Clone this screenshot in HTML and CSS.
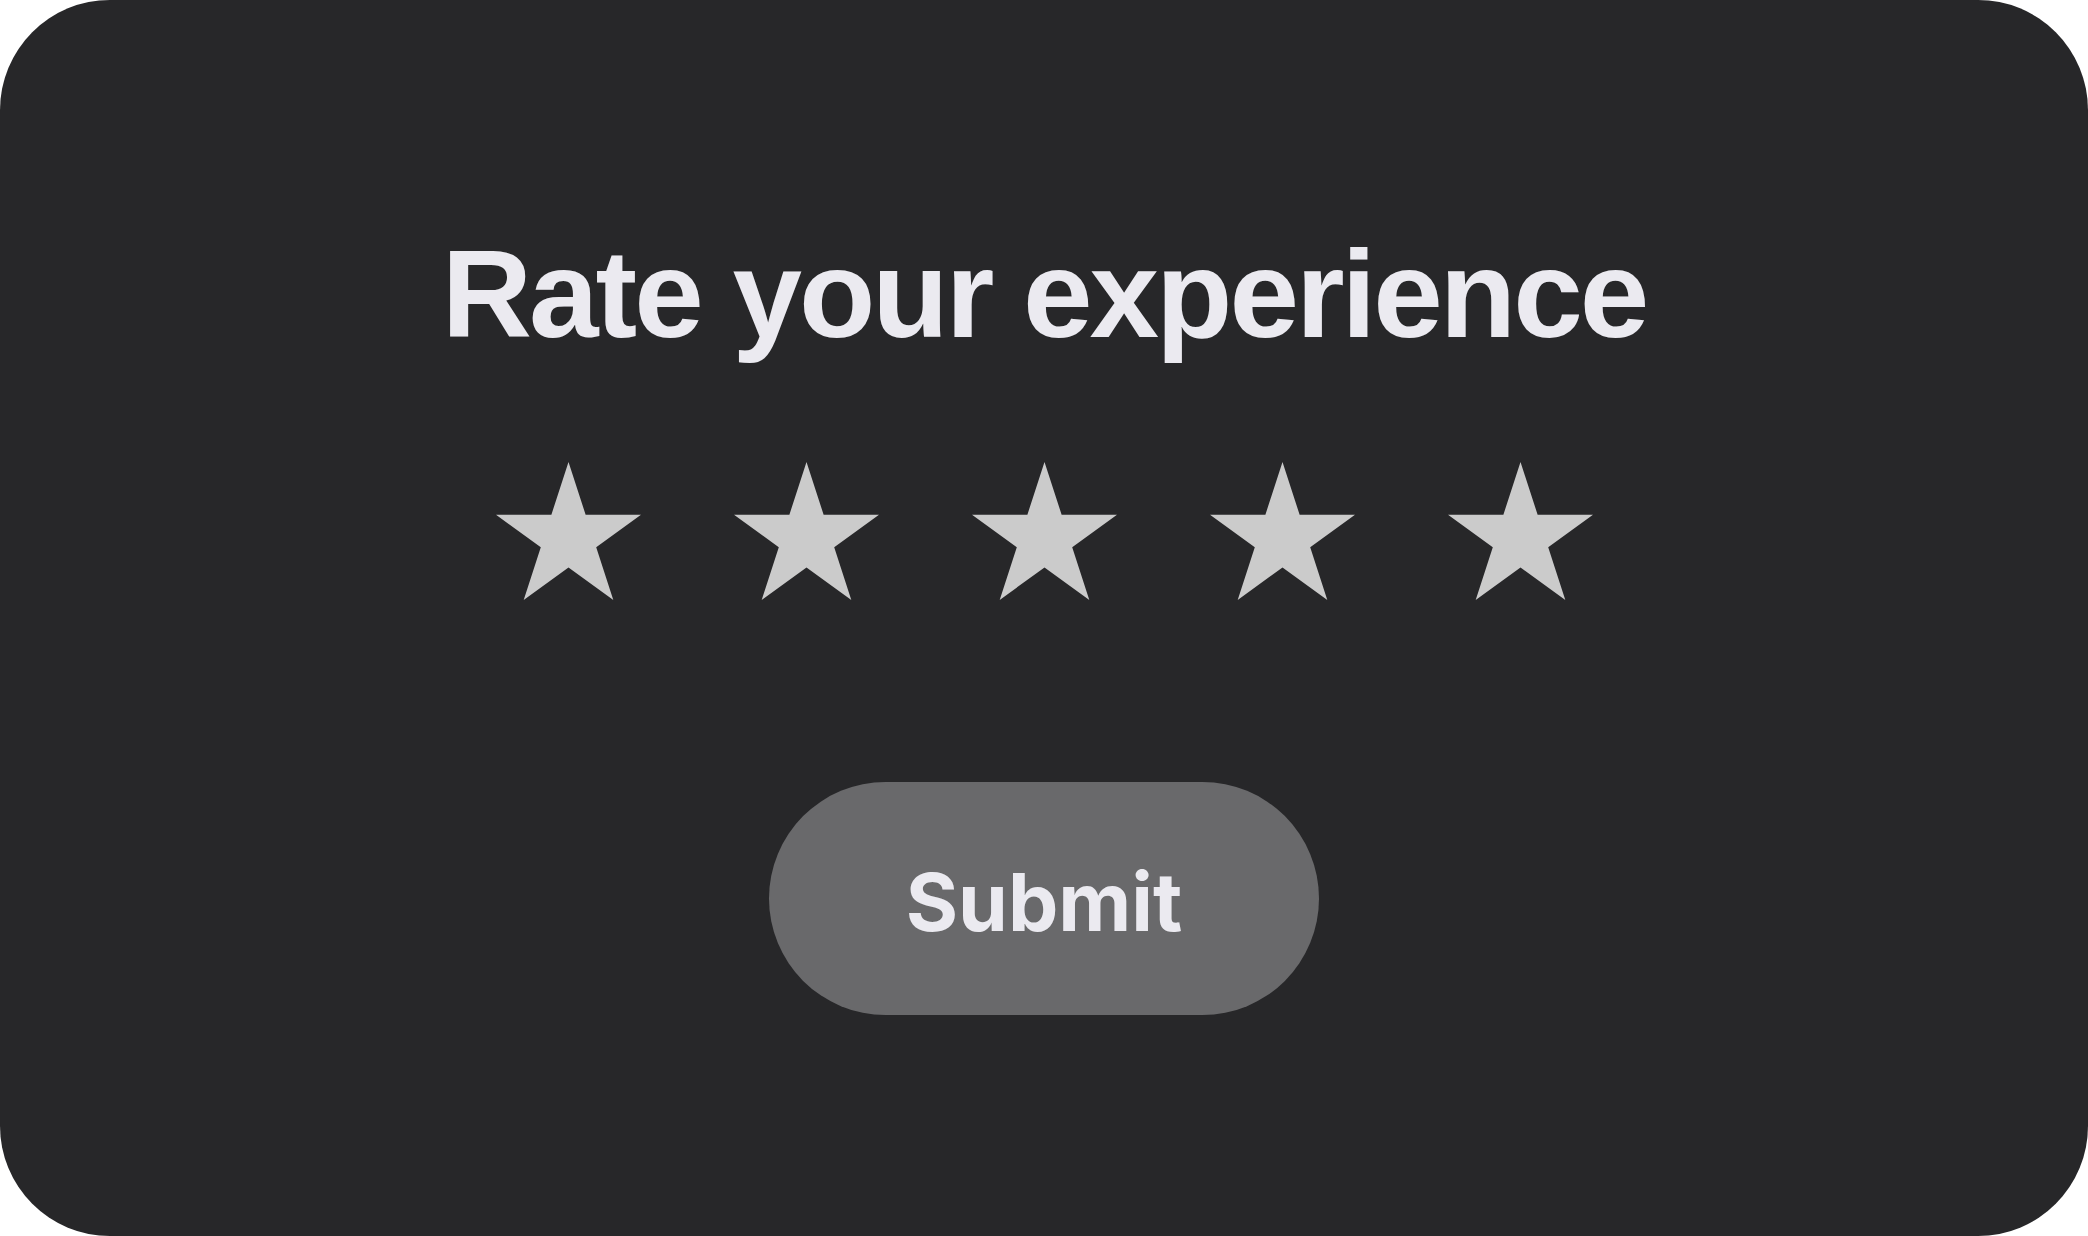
FILE: index.html
```html
<!DOCTYPE html>
<html lang="en">
<head>
<meta charset="utf-8">
<title>Rate your experience</title>
<link rel="stylesheet" href="styles.css">
</head>
<body>
<main class="card">
  <h1 class="title">Rate your experience</h1>
  <div class="stars">
    <svg class="star" viewBox="2.45 0 95.1 90.45"><polygon points="50,0 61.23,34.55 97.55,34.55 68.17,55.9 79.39,90.45 50,69.1 20.61,90.45 31.83,55.9 2.45,34.55 38.77,34.55"/></svg>
    <svg class="star" viewBox="2.45 0 95.1 90.45"><polygon points="50,0 61.23,34.55 97.55,34.55 68.17,55.9 79.39,90.45 50,69.1 20.61,90.45 31.83,55.9 2.45,34.55 38.77,34.55"/></svg>
    <svg class="star" viewBox="2.45 0 95.1 90.45"><polygon points="50,0 61.23,34.55 97.55,34.55 68.17,55.9 79.39,90.45 50,69.1 20.61,90.45 31.83,55.9 2.45,34.55 38.77,34.55"/></svg>
    <svg class="star" viewBox="2.45 0 95.1 90.45"><polygon points="50,0 61.23,34.55 97.55,34.55 68.17,55.9 79.39,90.45 50,69.1 20.61,90.45 31.83,55.9 2.45,34.55 38.77,34.55"/></svg>
    <svg class="star" viewBox="2.45 0 95.1 90.45"><polygon points="50,0 61.23,34.55 97.55,34.55 68.17,55.9 79.39,90.45 50,69.1 20.61,90.45 31.83,55.9 2.45,34.55 38.77,34.55"/></svg>
  </div>
  <button class="submit" type="button">Submit</button>
</main>
</body>
</html>
```

FILE: styles.css
```css
html, body {
  margin: 0;
  padding: 0;
  background: #ffffff;
}

.card {
  width: 2088px;
  height: 1236px;
  box-sizing: border-box;
  background: #272729;
  border-radius: 110px;
  display: flex;
  flex-direction: column;
  align-items: center;
  padding-top: 234px;
}

.title {
  margin: 0;
  font-family: "Liberation Sans", Arial, sans-serif;
  font-weight: 700;
  font-size: 125px;
  letter-spacing: -3px;
  line-height: 120px;
  color: #ebeaf0;
  white-space: nowrap;
}

.stars {
  display: flex;
  gap: 93px;
  margin-top: 108px;
}

.star {
  display: block;
  width: 145px;
  height: 138px;
  fill: #cbcbcb;
}

.submit {
  margin-top: 182px;
  width: 550px;
  height: 233px;
  border: none;
  border-radius: 117px;
  background: #69696b;
  color: #ebeaf0;
  font-family: Inter, "Noto Sans", sans-serif;
  font-weight: 700;
  font-size: 80px;
  line-height: 1;
  display: flex;
  align-items: center;
  justify-content: center;
  padding: 6px 0 0;
  cursor: pointer;
}
```
